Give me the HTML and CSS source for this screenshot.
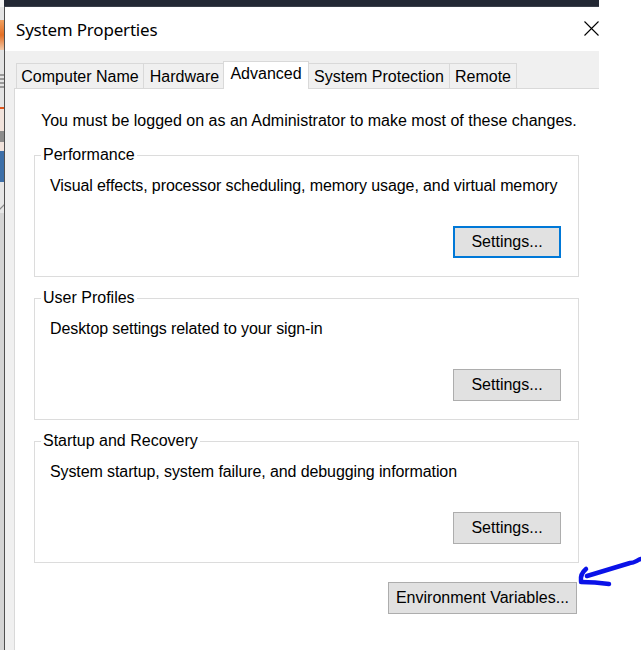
FILE: index.html
```html
<!DOCTYPE html>
<html lang="en">
<head>
    <meta charset="UTF-8">
    <meta name="viewport" content="width=device-width, initial-scale=1.0">
    <title>System Properties</title>
    <link rel="stylesheet" href="styles.css">
</head>
<body>
    <div class="screen">
        <!-- sliver of the app window behind the dialog -->
        <div class="behind">
            <span class="bh bh-top"></span>
            <span class="bh bh-gray1"></span>
            <span class="bh bh-icon"></span>
            <span class="bh bh-gray2"></span>
            <span class="bh bh-dots"></span>
            <span class="bh bh-gray3"></span>
            <span class="bh bh-orange"></span>
            <span class="bh bh-pink1"></span>
            <span class="bh bh-box"></span>
            <span class="bh bh-pink2"></span>
            <span class="bh bh-blue"></span>
            <span class="bh bh-gray4"></span>
            <span class="bh bh-slash"></span>
            <span class="bh bh-rest"></span>
        </div>

        <div class="dialog-col">
            <div class="dark-bar"></div>

            <div class="window">
                <div class="titlebar">
                    <span class="title">System Properties</span>
                    <svg class="close" width="15" height="15" viewBox="0 0 15 15">
                        <path d="M0.5 0.5 L14.5 14.5 M14.5 0.5 L0.5 14.5" stroke="#000" stroke-width="1.1" fill="none"/>
                    </svg>
                </div>

                <div class="tabstrip">
                    <div class="tab tab-name">Computer Name</div>
                    <div class="tab tab-hw">Hardware</div>
                    <div class="tab tab-adv tab-active">Advanced</div>
                    <div class="tab tab-prot">System Protection</div>
                    <div class="tab tab-remote">Remote</div>
                </div>

                <div class="body">
                    <div class="panel">
                        <p class="notice">You must be logged on as an Administrator to make most of these changes.</p>

                        <fieldset class="group">
                            <legend>Performance</legend>
                            <p class="group-text">Visual effects, processor scheduling, memory usage, and virtual memory</p>
                            <div class="group-actions">
                                <button class="btn btn-settings btn-focus">Settings...</button>
                            </div>
                        </fieldset>

                        <fieldset class="group">
                            <legend>User Profiles</legend>
                            <p class="group-text">Desktop settings related to your sign-in</p>
                            <div class="group-actions">
                                <button class="btn btn-settings">Settings...</button>
                            </div>
                        </fieldset>

                        <fieldset class="group">
                            <legend>Startup and Recovery</legend>
                            <p class="group-text">System startup, system failure, and debugging information</p>
                            <div class="group-actions">
                                <button class="btn btn-settings">Settings...</button>
                            </div>
                        </fieldset>

                        <div class="env-row">
                            <button class="btn btn-env">Environment Variables...</button>
                        </div>
                    </div>
                </div>
            </div>
        </div>
    </div>

    <!-- hand drawn marker pointing at the button -->
    <svg class="marker" width="66" height="40" viewBox="0 0 66 40">
        <path d="M66 7 C62 8 60 11 55 11 L12 24" stroke="#0a12e8" stroke-width="4.5" fill="none" stroke-linecap="round" stroke-linejoin="round"/>
        <path d="M11 17 Q5 22 6 29" stroke="#0a12e8" stroke-width="4.5" fill="none" stroke-linecap="round"/>
        <path d="M6 30 Q20 30 34 32" stroke="#0a12e8" stroke-width="4.5" fill="none" stroke-linecap="round"/>
    </svg>
</body>
</html>
```

FILE: styles.css
```css
:root {
    --dialog-bg: #f0f0f0;
    --line: #d9d9d9;
    --group-line: #dcdcdc;
    --btn-bg: #e1e1e1;
    --btn-line: #adadad;
    --focus: #0078d7;
}

* {
    margin: 0;
    padding: 0;
    box-sizing: border-box;
}

body {
    width: 641px;
    height: 650px;
    overflow: hidden;
    background: #fff;
    color: #000;
    font-family: "Liberation Sans", Arial, sans-serif;
    font-size: 16px;
    line-height: 18px;
    position: relative;
}

.screen {
    display: flex;
    height: 650px;
}

/* strip of the window behind */
.behind {
    width: 4px;
    display: flex;
    flex-direction: column;
}

.bh { display: block; width: 4px; }
.bh-top { height: 7px; background: #f4f4f4; }
.bh-gray1 { height: 13px; background: #e4e4e4; }
.bh-icon { height: 30px; background: linear-gradient(#f0a060, #e46f25 50%, #f3c9a8); }
.bh-gray2 { height: 22px; background: #e4e4e4; }
.bh-dots { height: 16px; background: repeating-linear-gradient(#e4e4e4 0 2px, #9a9a9a 2px 4px); }
.bh-gray3 { height: 19px; background: #e4e4e4; }
.bh-orange { height: 2px; background: #e2571c; }
.bh-pink1 { height: 22px; background: #f1e3dc; }
.bh-box { height: 11px; background: #8c8c8c; }
.bh-pink2 { height: 9px; background: #f1e3dc; }
.bh-blue { height: 31px; background: #3d6fa8; }
.bh-gray4 { height: 19px; background: #e6e6e6; }
.bh-slash { height: 12px; background: linear-gradient(135deg, #e6e6e6 40%, #8a8a8a 50%, #e6e6e6 60%); }
.bh-rest { flex: 1; background: #d4d4d4; }

.dialog-col {
    width: 595px;
    display: flex;
    flex-direction: column;
}

.dark-bar {
    height: 7px;
    background: #232834;
    border-bottom: 1px solid #3a3f4a;
}

.window {
    flex: 1;
    display: flex;
    flex-direction: column;
    background: var(--dialog-bg);
    border-left: 1px solid #4f4f4f;
}

.titlebar {
    height: 44px;
    background: #fff;
    display: flex;
    align-items: center;
    justify-content: space-between;
    padding-left: 11px;
}

.title {
    font-family: "Noto Sans", "Open Sans", sans-serif;
    font-size: 17px;
    line-height: 20px;
    letter-spacing: -0.2px;
    padding-top: 1px;
}

.close {
    display: block;
    margin-bottom: 1px;
}

/* tabs */
.tabstrip {
    height: 37px;
    display: flex;
    align-items: flex-end;
    padding-left: 12px;
}

.tab {
    height: 25px;
    padding-top: 4px;
    border: 1px solid var(--line);
    border-bottom: none;
    margin-left: -1px;
    white-space: nowrap;
    text-align: center;
}

.tab-name { width: 128px; }
.tab-hw { width: 83px; }
.tab-adv { width: 86px; margin-left: -3px; }
.tab-prot { width: 142px; }
.tab-remote { width: 68px; }

.tab-active {
    height: 28px;
    padding-top: 3px;
    background: #fff;
    margin-bottom: -1px;
    position: relative;
    z-index: 1;
}

.body {
    flex: 1;
    display: flex;
    padding-left: 9px;
}

.panel {
    flex: 1;
    background: #fff;
    border-top: 1px solid var(--line);
    border-left: 1px solid var(--line);
    padding-top: 23px;
}

.notice {
    margin-left: 26px;
    margin-bottom: 16px;
    white-space: nowrap;
}

/* group boxes */
.group {
    width: 545px;
    min-width: 0;
    margin-left: 19px;
    margin-bottom: 12px;
    border: 1px solid var(--group-line);
    padding: 13px 17px 18px 15px;
}

.group legend {
    padding: 0 2px;
    margin-left: -9px;
}

.group-text {
    white-space: nowrap;
    letter-spacing: -0.1px;
}

.group-actions {
    display: flex;
    justify-content: flex-end;
    margin-top: 31px;
}

.btn {
    height: 32px;
    background: var(--btn-bg);
    border: 1px solid var(--btn-line);
    font: inherit;
    color: #000;
    text-align: center;
}

.btn-settings { width: 108px; }
.btn-env { width: 189px; }

.btn-focus {
    border: 2px solid var(--focus);
}

.env-row {
    width: 545px;
    margin-left: 19px;
    margin-top: 19px;
    display: flex;
    justify-content: flex-end;
    padding-right: 2px;
}

.marker {
    position: absolute;
    left: 575px;
    top: 552px;
}
```
